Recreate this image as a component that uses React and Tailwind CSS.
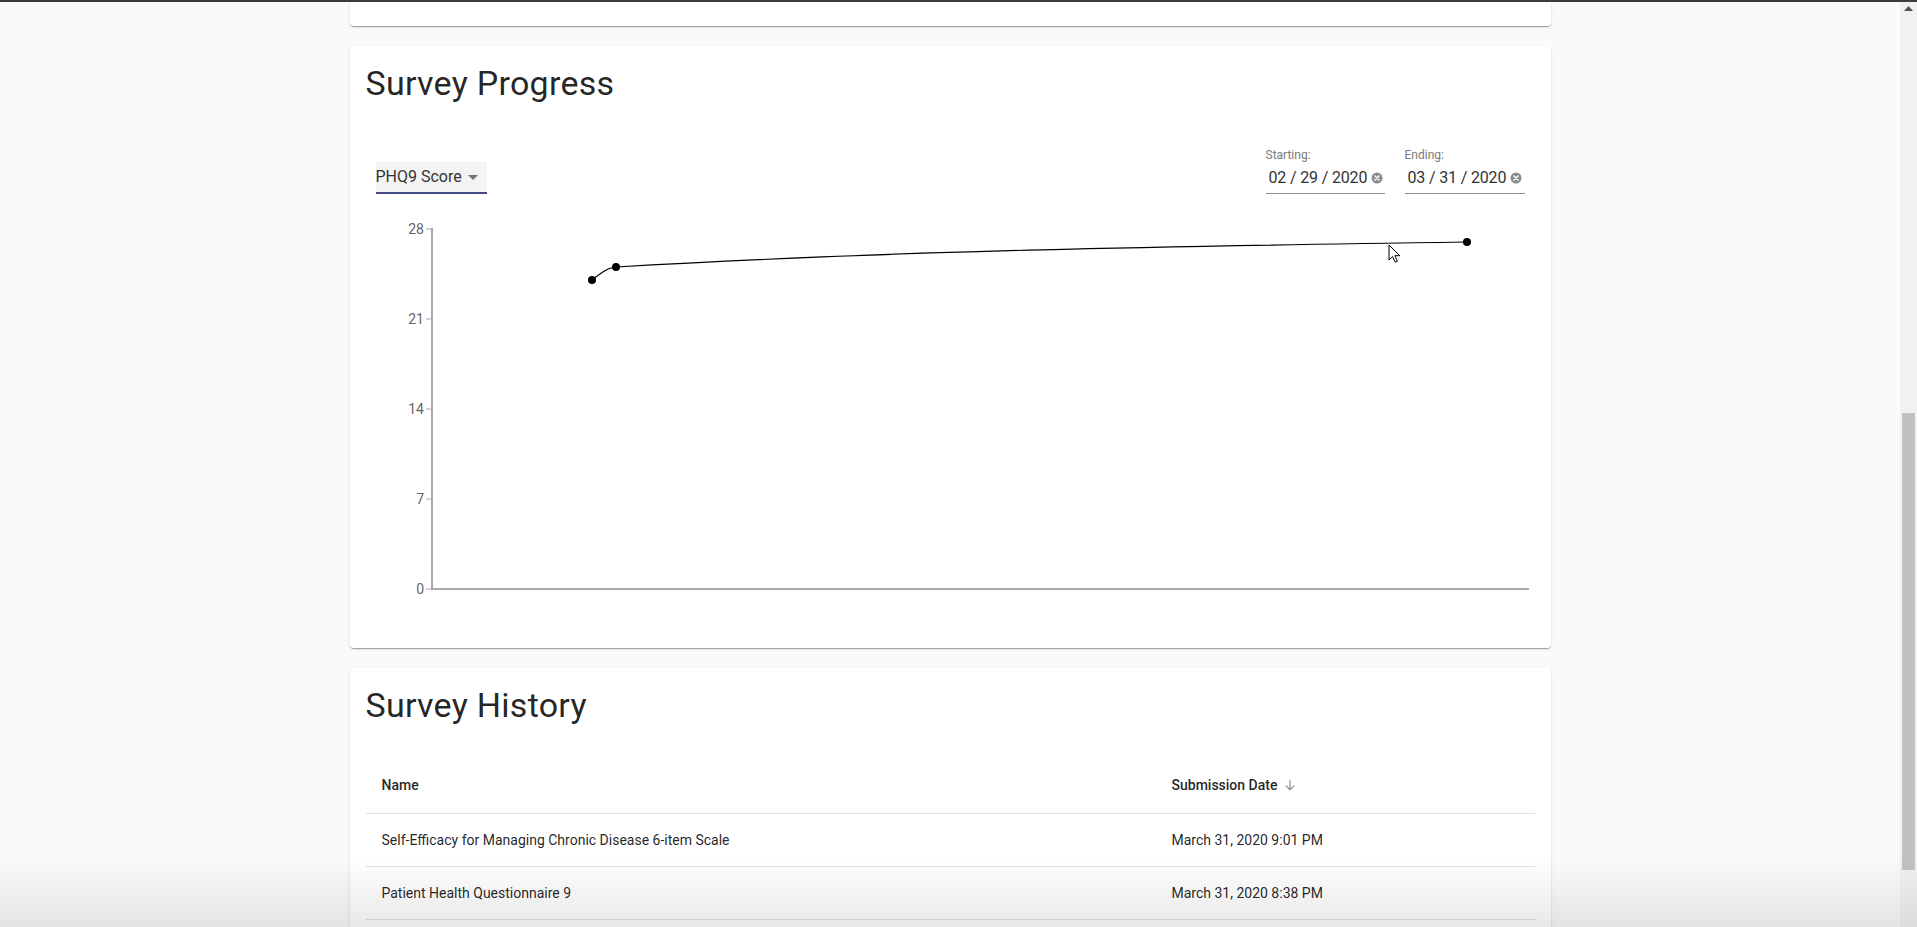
import React from "react";

const cardShadow =
  "shadow-[0_2px_1px_-1px_rgba(0,0,0,0.2),0_1px_1px_0_rgba(0,0,0,0.14),0_1px_3px_0_rgba(0,0,0,0.12)]";

function ClearIcon() {
  return (
    <svg width="12" height="12" viewBox="0 0 24 24" className="shrink-0">
      <circle cx="12" cy="12" r="11" fill="#8c8c8c" />
      <path d="M8 8 L16 16 M16 8 L8 16" stroke="#fff" strokeWidth="3" strokeLinecap="round" />
    </svg>
  );
}

function DateField({ label, value, width }) {
  return (
    <div className={`flex flex-col ${width}`}>
      <div className="text-[12px] leading-[16px] text-[#7a7a7a]">{label}</div>
      <div className="flex h-[31px] items-center gap-[4px] border-b border-[#8f8f8f] pl-[3px]">
        <span className="shrink-0 whitespace-nowrap text-[16px] tracking-[-0.01em] text-[#333]">{value}</span>
        <ClearIcon />
      </div>
    </div>
  );
}

function Chart() {
  const ticks = [
    { v: 28, y: 229 },
    { v: 21, y: 319 },
    { v: 14, y: 409 },
    { v: 7, y: 499 },
    { v: 0, y: 589 },
  ];
  const pts = [
    [591, 280],
    [615, 267],
    [1466, 242],
  ];
  return (
    <svg width="1169" height="436" viewBox="365 194 1169 436" className="block">
      <line x1="431" y1="228" x2="431" y2="590" stroke="#a8a8a8" strokeWidth="2" />
      <line x1="430" y1="589" x2="1528" y2="589" stroke="#a8a8a8" strokeWidth="2" />
      {ticks.map((t) => (
        <g key={t.v}>
          <line x1="425" y1={t.y} x2="431" y2={t.y} stroke="#a8a8a8" strokeWidth="1" />
          <text
            x="423"
            y={t.y + 5}
            textAnchor="end"
            fontSize="14"
            fill="#666"
            fontFamily="Roboto, sans-serif"
          >
            {t.v}
          </text>
        </g>
      ))}
      <path
        d="M591,280 C599,273.7 607,267.47 615,267 C898.67,250.33 1182.33,246.17 1466,242"
        fill="none"
        stroke="#000"
        strokeWidth="1.2"
      />
      {pts.map(([x, y], i) => (
        <circle key={i} cx={x} cy={y} r="4" fill="#000" />
      ))}
      <g transform="translate(1388,245)">
        <path
          d="M0,0 L0,15 L3.6,11.6 L6.2,17.2 L8.4,16.2 L5.9,10.7 L10.8,10.7 Z"
          fill="#fff"
          stroke="#000"
          strokeWidth="1"
          strokeLinejoin="round"
        />
      </g>
    </svg>
  );
}

export default function App() {
  return (
    <div className="relative flex h-[927px] w-[1917px] flex-col overflow-hidden bg-[#fafafa] font-['Roboto','Liberation_Sans',sans-serif] text-[rgba(0,0,0,0.87)]">
      <div className="h-[2px] w-full shrink-0 bg-[#3c3c3c]" />
      <div className="flex min-h-0 flex-1">
        <main className="flex flex-1 flex-col items-center overflow-hidden">
          {/* previous card (only bottom visible) */}
          <div className={`h-[24px] w-[1201px] shrink-0 rounded-b-[4px] bg-white ${cardShadow}`} />

          {/* Survey Progress */}
          <section
            className={`mt-[20px] flex h-[602px] w-[1201px] shrink-0 flex-col rounded-[4px] bg-white px-[16px] pt-[16px] ${cardShadow}`}
          >
            <h2 className="h-[42px] text-[34px] leading-[42px] font-normal tracking-[0.008em]">
              Survey Progress
            </h2>
            <div className="mt-[42px] flex h-[48px] items-end justify-between px-[10px]">
              <div className="flex h-[32px] w-[111px] items-center justify-between border-b-2 border-[#444a86] bg-[#f4f4f4] pr-[9px]">
                <span className="text-[16px] leading-none text-[#333]">PHQ9 Score</span>
                <svg width="10" height="5" viewBox="0 0 10 5">
                  <path d="M0 0 L10 0 L5 5 Z" fill="#757575" />
                </svg>
              </div>
              <div className="flex gap-[20px]">
                <DateField label="Starting:" value="02 / 29 / 2020" width="w-[119px]" />
                <DateField label="Ending:" value="03 / 31 / 2020" width="w-[120px]" />
              </div>
            </div>
            <Chart />
          </section>

          {/* Survey History */}
          <section
            className={`mt-[20px] flex w-[1201px] shrink-0 flex-col rounded-[4px] bg-white px-[16px] pt-[16px] pb-[16px] ${cardShadow}`}
          >
            <h2 className="h-[42px] text-[34px] leading-[42px] font-normal tracking-[0.008em]">
              Survey History
            </h2>
            <div className="mt-[31px] flex flex-col text-[14px]">
              <div className="grid h-[57px] grid-cols-[790px_1fr] items-center border-b border-[#e0e0e0] font-medium">
                <div className="pl-[16px]">Name</div>
                <div className="flex items-center gap-[6px] pl-[16px]">
                  <span>Submission Date</span>
                  <svg width="14" height="14" viewBox="0 0 24 24">
                    <path
                      d="M12 4 V20 M5 13 L12 20 L19 13"
                      fill="none"
                      stroke="#8a8a8a"
                      strokeWidth="2"
                    />
                  </svg>
                </div>
              </div>
              <div className="grid h-[53px] grid-cols-[790px_1fr] items-center border-b border-[#e0e0e0]">
                <div className="pl-[16px]">Self-Efficacy for Managing Chronic Disease 6-item Scale</div>
                <div className="pl-[16px]">March 31, 2020 9:01 PM</div>
              </div>
              <div className="grid h-[53px] grid-cols-[790px_1fr] items-center border-b border-[#e0e0e0]">
                <div className="pl-[16px]">Patient Health Questionnaire 9</div>
                <div className="pl-[16px]">March 31, 2020 8:38 PM</div>
              </div>
              <div className="h-[53px]" />
            </div>
          </section>
        </main>

        {/* scrollbar */}
        <div className="flex w-[17px] shrink-0 flex-col items-center bg-[#f1f1f1]">
          <svg width="9" height="5" viewBox="0 0 9 5" className="mt-[4px]">
            <path d="M0 5 L4.5 0 L9 5 Z" fill="#505050" />
          </svg>
          <div className="mt-[402px] h-[457px] w-[13px] bg-[#c1c1c1]" />
        </div>
      </div>

      {/* bottom fade overlay */}
      <div className="pointer-events-none absolute bottom-0 left-0 h-[70px] w-full bg-gradient-to-b from-transparent to-[rgba(0,0,0,0.09)]" />
    </div>
  );
}
